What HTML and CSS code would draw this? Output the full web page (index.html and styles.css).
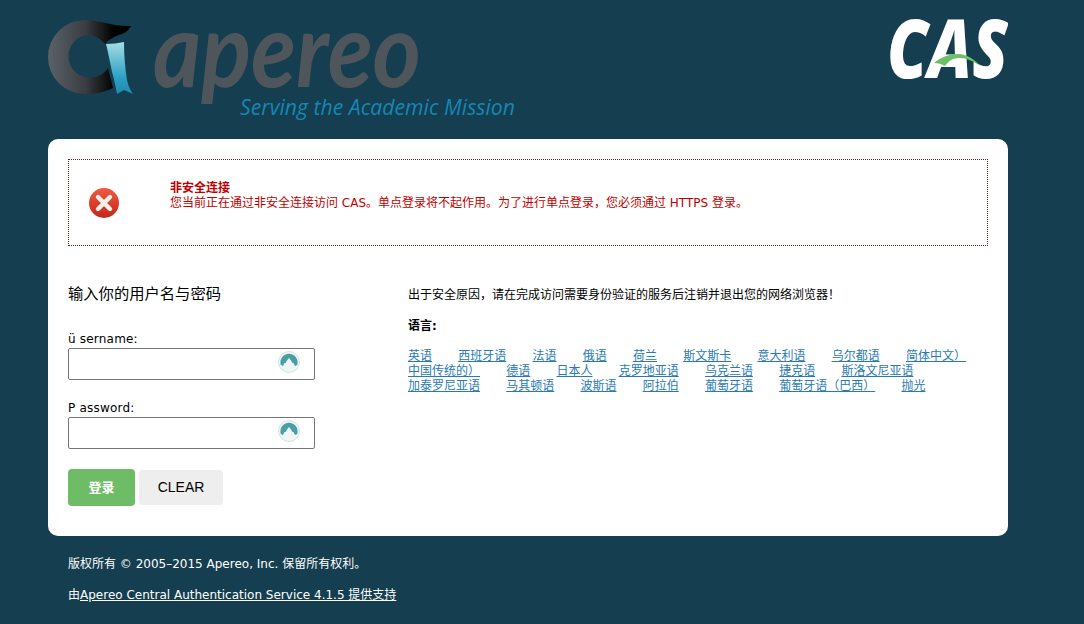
FILE: index.html
```html
<!DOCTYPE html>
<html lang="zh">
<head>
    <meta charset="UTF-8">
    <title>CAS – Central Authentication Service</title>
    <link rel="stylesheet" href="styles.css">
</head>
<body>

    <header class="site-header">
        <svg class="logo-apereo" width="480" height="125" viewBox="48 0 480 125">
            <defs>
                <linearGradient id="ring-fill" x1="0" x2="1" y1="0" y2="0">
                    <stop offset="0" stop-color="#5a6167"/>
                    <stop offset="0.45" stop-color="#3a3e42"/>
                    <stop offset="0.8" stop-color="#000"/>
                </linearGradient>
                <linearGradient id="ribbon-fill" x1="0" x2="0" y1="0" y2="1">
                    <stop offset="0" stop-color="#a4dde4"/>
                    <stop offset="0.7" stop-color="#2a9fc4"/>
                    <stop offset="1" stop-color="#2388ac"/>
                </linearGradient>
            </defs>
            <path fill="url(#ring-fill)" d="M85 20C100 20 115 27 131 26C128 31 125 33 122 34C115 36 109 39 105 44C100 38 94 35 86.5 35A21.5 21.5 0 1 0 108 68L113 88C105 92 95 94 85 94A37 37 0 0 1 85 20Z"/>
            <path fill="url(#ribbon-fill)" d="M106 44C112 44 118 43 124 42C124 55 125 68 127 80C128 86 131 91 133 94L124 90L117 94C115 85 114 78 112 72C110 62 108 52 106 44Z"/>
            <text class="logo-word" x="153" y="87" textLength="268" lengthAdjust="spacingAndGlyphs">apereo</text>
            <text class="logo-tag" x="240" y="115" textLength="275" lengthAdjust="spacingAndGlyphs">Serving the Academic Mission</text>
        </svg>
        <svg class="logo-cas" width="120" height="62" viewBox="888 18 120 62">
            <text class="cas-word" x="887" y="78" textLength="121" lengthAdjust="spacingAndGlyphs">CAS</text>
            <path fill="#6cc066" d="M934 63C941 57 950 54 958 54C966 54 975 59 980 66C974 61 966 58 960 58C954 58 949 60 945 66C942 64 938 63 934 63Z"/>
        </svg>
    </header>

    <main class="card">
        <div class="msg-box">
            <svg class="msg-icon" width="30" height="30" viewBox="0 0 30 30">
                <defs>
                    <linearGradient id="err-fill" x1="0" x2="0" y1="0" y2="1">
                        <stop offset="0" stop-color="#ee5b40"/>
                        <stop offset="1" stop-color="#c4261c"/>
                    </linearGradient>
                </defs>
                <circle cx="15" cy="15" r="15" fill="url(#err-fill)"/>
                <path d="M9 9L21 21M21 9L9 21" stroke="#f4f0ec" stroke-width="4.4" stroke-linecap="round"/>
            </svg>
            <div class="msg-text">
                <h2>非安全连接</h2>
                <p>您当前正在通过非安全连接访问 CAS。单点登录将不起作用。为了进行单点登录，您必须通过 HTTPS 登录。</p>
            </div>
        </div>

        <div class="columns">
            <form class="login-form">
                <h3>输入你的用户名与密码</h3>
                <label class="field">
                    <span>ü sername:</span>
                    <span class="input-wrap">
                        <input type="text">
                        <svg class="input-icon" width="22" height="22" viewBox="0 0 22 22">
                            <circle cx="11" cy="11" r="10.5" fill="#eef6f6" stroke="#d5e5e6"/>
                            <path fill="#4a9ea6" d="M2.8 14A8.6 8.6 0 1 1 19.2 14L17 15L15.5 12L14.5 12L13 9.5L11 7L9 9.5L7.5 12L6.5 12L5 15Z"/>
                        </svg>
                    </span>
                </label>
                <label class="field">
                    <span>P assword:</span>
                    <span class="input-wrap">
                        <input type="password">
                        <svg class="input-icon" width="22" height="22" viewBox="0 0 22 22">
                            <circle cx="11" cy="11" r="10.5" fill="#eef6f6" stroke="#d5e5e6"/>
                            <path fill="#4a9ea6" d="M2.8 14A8.6 8.6 0 1 1 19.2 14L17 15L15.5 12L14.5 12L13 9.5L11 7L9 9.5L7.5 12L6.5 12L5 15Z"/>
                        </svg>
                    </span>
                </label>
                <div class="actions">
                    <button type="button" class="btn-submit">登录</button>
                    <button type="button" class="btn-clear">CLEAR</button>
                </div>
            </form>

            <aside class="sidebar">
                <p>出于安全原因，请在完成访问需要身份验证的服务后注销并退出您的网络浏览器！</p>
                <h4>语言:</h4>
                <div class="languages">
                    <a href="#">英语</a>
                    <a href="#">西班牙语</a>
                    <a href="#">法语</a>
                    <a href="#">俄语</a>
                    <a href="#">荷兰</a>
                    <a href="#">斯文斯卡</a>
                    <a href="#">意大利语</a>
                    <a href="#">乌尔都语</a>
                    <a href="#">简体中文）</a>
                    <a href="#">中国传统的）</a>
                    <a href="#">德语</a>
                    <a href="#">日本人</a>
                    <a href="#">克罗地亚语</a>
                    <a href="#">乌克兰语</a>
                    <a href="#">捷克语</a>
                    <a href="#">斯洛文尼亚语</a>
                    <a href="#">加泰罗尼亚语</a>
                    <a href="#">马其顿语</a>
                    <a href="#">波斯语</a>
                    <a href="#">阿拉伯</a>
                    <a href="#">葡萄牙语</a>
                    <a href="#">葡萄牙语（巴西）</a>
                    <a href="#">抛光</a>
                </div>
            </aside>
        </div>
    </main>

    <footer class="site-footer">
        <p>版权所有 © 2005–2015 Apereo, Inc. 保留所有权利。</p>
        <p>由<a href="#">Apereo Central Authentication Service 4.1.5 提供支持</a></p>
    </footer>

</body>
</html>
```

FILE: styles.css
```css
* {
    margin: 0;
    padding: 0;
    box-sizing: border-box;
}

body {
    font-family: "DejaVu Sans", "Noto Sans CJK SC", sans-serif;
    font-size: 12px;
    line-height: 15px;
    background-color: #153e50;
    color: #000;
}

.site-header {
    display: flex;
    justify-content: space-between;
    width: 960px;
    height: 139px;
    margin-left: 48px;
    padding-top: 18px;
    align-items: flex-start;
}

.logo-apereo {
    margin-top: -18px;
}

.logo-word {
    font-family: "Lato", sans-serif;
    font-style: italic;
    font-weight: 700;
    font-size: 104px;
    fill: #4f565b;
}

.logo-tag {
    font-family: "Open Sans", sans-serif;
    font-style: italic;
    font-size: 21px;
    fill: #1388b4;
}

.cas-word {
    font-family: "Open Sans", sans-serif;
    font-style: italic;
    font-weight: 800;
    font-size: 81px;
    fill: #fff;
}

/* White card */
.card {
    width: 960px;
    height: 397px;
    margin-left: 48px;
    padding: 20px;
    background: #fff;
    border-radius: 10px;
}

.msg-box {
    display: flex;
    align-items: center;
    height: 87px;
    padding-left: 20px;
    border: 1px dotted #7a1010;
    color: #c00000;
}

.msg-icon {
    margin-right: 51px;
}

.msg-text {
    margin-top: -13px;
}

.msg-text h2 {
    font-size: 12px;
    font-weight: bold;
}

.msg-text p {
    font-size: 12px;
}

.columns {
    display: flex;
    margin-top: 38px;
}

.login-form {
    flex: none;
    width: 340px;
}

.login-form h3 {
    font-size: 15.3px;
    font-weight: normal;
    line-height: 20px;
    margin-bottom: 28px;
}

.field {
    display: block;
    margin-bottom: 21px;
    letter-spacing: 0.2px;
}

.field > span:first-child {
    display: block;
    margin-bottom: 1px;
}

.input-wrap {
    position: relative;
    display: block;
    width: 247px;
}

.input-wrap input {
    display: block;
    width: 247px;
    height: 32px;
    border: 1px solid #767676;
    border-radius: 2px;
    background: #fff;
}

.input-icon {
    position: absolute;
    right: 15px;
    top: 3px;
}

.actions {
    display: flex;
    align-items: center;
    gap: 4px;
    margin-top: -1px;
}

.btn-submit {
    width: 67px;
    height: 37px;
    padding-bottom: 2px;
    border: none;
    border-radius: 4px;
    background-color: #6fbc66;
    color: #fff;
    font-family: "DejaVu Sans", "Noto Sans CJK SC", sans-serif;
    font-size: 13px;
    font-weight: bold;
}

.btn-clear {
    width: 84px;
    height: 35px;
    padding-bottom: 2px;
    border: none;
    border-radius: 4px;
    background-color: #eeeeee;
    color: #000;
    font-family: "Liberation Sans", sans-serif;
    font-size: 14px;
}

.sidebar {
    flex: none;
    width: 580px;
}

.sidebar p {
    margin-top: 4px;
}

.sidebar h4 {
    font-size: 12px;
    font-weight: bold;
    margin-top: 16px;
}

.languages {
    width: 584px;
    margin-top: 15px;
}

.languages a {
    display: inline-block;
    color: #2a7ab0;
    margin-right: 22.4px;
}

.site-footer {
    padding: 21px 0 0 68px;
    color: #fff;
}

.site-footer p {
    margin-bottom: 16px;
}

.site-footer a {
    color: #fff;
}
```
